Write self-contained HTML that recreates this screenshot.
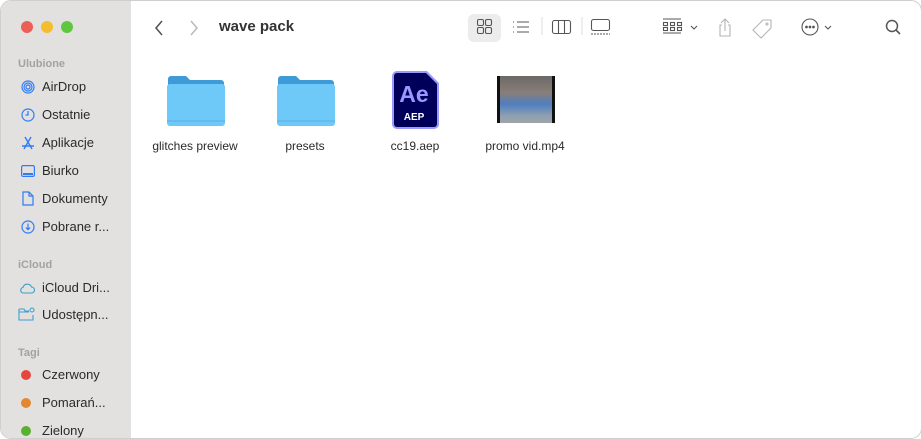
<!DOCTYPE html><html><head><style>
body{margin:0;width:921px;height:439px;background:#fff;font-family:"Liberation Sans",sans-serif;overflow:hidden;position:relative}
.win{position:absolute;left:0;top:0;width:920px;height:437px;border:1px solid #cfcfcf;border-radius:11px;overflow:hidden;background:#fff}
.side{position:absolute;left:0;top:0;width:130px;height:100%;background:#e3e1df}
.dot{position:absolute;top:20px;width:12px;height:12px;border-radius:50%}
.h{position:absolute;left:17px;font-size:11px;color:#a4a2a0;font-weight:bold}
.it{position:absolute;left:41px;font-size:13px;color:#2a2a2a}
.ic{position:absolute;left:20px}
.tag{position:absolute;left:20px;width:10px;height:10px;border-radius:50%}
.lbl{position:absolute;top:138px;font-size:12px;color:#2a2a2a;text-align:center;width:110px}
</style></head><body><div class="win">
<div class="side">
<div class="dot" style="left:20px;background:#ec5f57"></div>
<div class="dot" style="left:40px;background:#f4bd30"></div>
<div class="dot" style="left:60px;background:#5fc73f"></div>
<div class="h" style="top:57px">Ulubione</div>
<svg class="ic" style="top:79px" width="14" height="14" viewBox="0 0 14 14" fill="none" stroke="#2f7cf6" stroke-width="1.2"><circle cx="7" cy="7" r="6"/><circle cx="7" cy="7" r="4"/><circle cx="7" cy="7" r="2"/></svg><div class="it" style="top:78px">AirDrop</div>
<svg class="ic" style="top:107px" width="14" height="14" viewBox="0 0 14 14" fill="none" stroke="#2f7cf6" stroke-width="1.2"><circle cx="7" cy="7" r="6"/><path d="M7 3v4H4.5"/></svg><div class="it" style="top:106px">Ostatnie</div>
<svg class="ic" style="top:135px" width="14" height="14" viewBox="0 0 14 14" fill="none" stroke="#2f7cf6" stroke-width="1.4"><path d="M4 1l7 12M10 1L3 13M1 10h12"/></svg><div class="it" style="top:134px">Aplikacje</div>
<svg class="ic" style="top:163px" width="14" height="14" viewBox="0 0 14 14" fill="none" stroke="#2f7cf6" stroke-width="1.2"><rect x="0.6" y="1.6" width="12.8" height="10.8" rx="1.5"/><path d="M2 10h10" stroke-width="2"/></svg><div class="it" style="top:162px">Biurko</div>
<svg class="ic" style="top:190px" width="14" height="15" viewBox="0 0 14 15" fill="none" stroke="#2f7cf6" stroke-width="1.2"><path d="M2 1h6l4 4v9H2zM8 1v4h4"/></svg><div class="it" style="top:190px">Dokumenty</div>
<svg class="ic" style="top:219px" width="14" height="14" viewBox="0 0 14 14" fill="none" stroke="#2f7cf6" stroke-width="1.2"><circle cx="7" cy="7" r="6"/><path d="M7 3.5v6M4.8 7.5L7 9.7 9.2 7.5"/></svg><div class="it" style="top:218px">Pobrane r...</div>
<div class="h" style="top:258px">iCloud</div>
<svg class="ic" style="top:281px;left:18px" width="16" height="12" viewBox="0 0 16 12" fill="none" stroke="#3b9fd0" stroke-width="1.1"><path d="M4 11h8.5a3 3 0 0 0 0-6A4.5 4.5 0 0 0 4 5.5 2.8 2.8 0 0 0 4 11z"/></svg><div class="it" style="top:279px">iCloud Dri...</div>
<svg class="ic" style="top:306px;left:17px" width="17" height="15" viewBox="0 0 17 15" fill="none" stroke="#3b9fd0" stroke-width="1.1"><path d="M1 2h5l1 2h4M1 2v11h14V8M1 5h10"/><circle cx="14" cy="3" r="2"/></svg><div class="it" style="top:306px">Udostępn...</div>
<div class="h" style="top:346px">Tagi</div>
<div class="tag" style="top:369px;background:#e5473f"></div><div class="it" style="top:366px">Czerwony</div>
<div class="tag" style="top:397px;background:#e38731"></div><div class="it" style="top:394px">Pomarań...</div>
<div class="tag" style="top:425px;background:#5ab02f"></div><div class="it" style="top:422px">Zielony</div>
</div>
<svg style="position:absolute;left:150px;top:18px" width="60" height="18" viewBox="0 0 60 18" fill="none" stroke-width="1.6"><path d="M11 2L5 9l6 7" stroke="#555"/><path d="M40 2l6 7-6 7" stroke="#bbb"/></svg>
<div style="position:absolute;left:218px;top:17px;font-size:15px;font-weight:bold;color:#333">wave pack</div>
<div style="position:absolute;left:467px;top:13px;width:33px;height:28px;background:#ececec;border-radius:6px"></div>
<svg style="position:absolute;left:450px;top:0" width="471" height="60" viewBox="0 0 471 60" fill="none" stroke="#555" stroke-width="1.1">
<rect x="26.5" y="18.5" width="6" height="6" rx="1.5"/><rect x="34.5" y="18.5" width="6" height="6" rx="1.5"/><rect x="26.5" y="26.5" width="6" height="6" rx="1.5"/><rect x="34.5" y="26.5" width="6" height="6" rx="1.5"/>
<path d="M62 21h1M62 26h1M62 31h1M66 21h12M66 26h12M66 31h12"/>
<path d="M91 16v18M131 16v18" stroke="#e0e0e0"/>
<rect x="101.5" y="19.5" width="18" height="13" rx="2"/><path d="M107.5 19.5v13M113.5 19.5v13"/>
<rect x="140.5" y="18.5" width="18" height="11" rx="2"/><path d="M140 33h19" stroke-dasharray="2 1"/>
<path d="M212 18h18M212 32h18"/><rect x="212.5" y="21.5" width="4" height="3"/><rect x="219.5" y="21.5" width="4" height="3"/><rect x="226.5" y="21.5" width="4" height="3"/><rect x="212.5" y="26.5" width="4" height="3"/><rect x="219.5" y="26.5" width="4" height="3"/><rect x="226.5" y="26.5" width="4" height="3"/>
<path d="M240 25l3 3 3-3"/>
<g stroke="#b5b5b5"><path d="M274 18v12M270 22l4-4 4 4M271 24h-2v11h10V24h-2"/><path d="M312 19h8v8l-10 10-8-8z"/><circle cx="316" cy="23" r="1"/></g>
<circle cx="359" cy="26" r="8"/><circle cx="355.5" cy="26" r=".8" fill="#555"/><circle cx="359" cy="26" r=".8" fill="#555"/><circle cx="362.5" cy="26" r=".8" fill="#555"/>
<path d="M374 25l3 3 3-3"/>
<circle cx="441" cy="25" r="5.5" stroke-width="1.5"/><path d="M445 29l4 4" stroke-width="1.6"/>
</svg>
<svg style="position:absolute;left:165px;top:74px" width="60" height="52" viewBox="0 0 60 52"><path d="M2 4a3 3 0 0 1 3-3h15l4 4h31a3 3 0 0 1 3 3v40a3 3 0 0 1-3 3H5a3 3 0 0 1-3-3z" fill="#3f9ad8"/><rect x="1" y="9" width="58" height="42" rx="3" fill="#6ec9f8"/><path d="M1 46h58" stroke="#5ab0e2"/></svg>
<svg style="position:absolute;left:275px;top:74px" width="60" height="52" viewBox="0 0 60 52"><path d="M2 4a3 3 0 0 1 3-3h15l4 4h31a3 3 0 0 1 3 3v40a3 3 0 0 1-3 3H5a3 3 0 0 1-3-3z" fill="#3f9ad8"/><rect x="1" y="9" width="58" height="42" rx="3" fill="#6ec9f8"/><path d="M1 46h58" stroke="#5ab0e2"/></svg>
<svg style="position:absolute;left:391px;top:69px" width="48" height="60" viewBox="0 0 48 60"><path d="M5 1h30l12 12v41a5 5 0 0 1-5 5H5a5 5 0 0 1-5-5V6a5 5 0 0 1 5-5z" fill="#9999ff"/><path d="M5 3h29l11 11v40a3 3 0 0 1-3 3H5a3 3 0 0 1-3-3V6a3 3 0 0 1 3-3z" fill="#00005b"/><text x="22" y="32" font-family="Liberation Sans" font-weight="bold" font-size="23" fill="#9999ff" text-anchor="middle">Ae</text><text x="22" y="50" font-family="Liberation Sans" font-weight="bold" font-size="10" fill="#fff" text-anchor="middle">AEP</text></svg>
<div style="position:absolute;left:496px;top:75px;width:58px;height:47px;background:linear-gradient(180deg,#6a6966 0%,#8a7d78 35%,#4f7fc0 60%,#8fa0b0 85%,#a0a4a8 100%);border-left:3px solid #111;border-right:3px solid #111;box-sizing:border-box"></div>
<div class="lbl" style="left:139px">glitches preview</div>
<div class="lbl" style="left:249px">presets</div>
<div class="lbl" style="left:359px">cc19.aep</div>
<div class="lbl" style="left:469px">promo vid.mp4</div>
</div></body></html>
